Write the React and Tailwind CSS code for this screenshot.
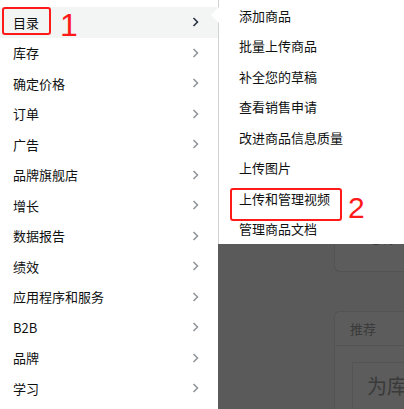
import React from "react";

const mainItems = [
  "目录",
  "库存",
  "确定价格",
  "订单",
  "广告",
  "品牌旗舰店",
  "增长",
  "数据报告",
  "绩效",
  "应用程序和服务",
  "B2B",
  "品牌",
  "学习",
];

const subItems = [
  "添加商品",
  "批量上传商品",
  "补全您的草稿",
  "查看销售申请",
  "改进商品信息质量",
  "上传图片",
  "上传和管理视频",
  "管理商品文档",
];

const Chevron = ({ dark }) => (
  <svg width="7" height="10" viewBox="0 0 7 10" fill="none">
    <path
      d="M1.5 1 L5.5 5 L1.5 9"
      stroke={dark ? "#232f3e" : "#8f9398"}
      strokeWidth="1.5"
    />
  </svg>
);

const App = () => {
  return (
    <div
      className="relative flex w-[404px] h-[409px] overflow-hidden bg-white"
      style={{ fontFamily: '"Noto Sans CJK SC", "Noto Sans", sans-serif' }}
    >
      {/* left menu */}
      <div className="w-[218px] shrink-0 pt-[7px] bg-white">
        {mainItems.map((item, i) => (
          <div
            key={item}
            className={
              "flex items-center justify-between h-[30.5px] pl-[13px] pr-[19px] text-[13px] text-[#0f1111] " +
              (i === 0 ? "bg-[#f3f4f4]" : "")
            }
          >
            <span>{item}</span>
            <Chevron dark={i === 0} />
          </div>
        ))}
      </div>

      {/* right side */}
      <div className="flex flex-col flex-1 min-w-0">
        <div className="h-[7px] bg-[#2b3035]" />
        <div className="relative z-10 flex flex-col h-[245px] bg-white border-l border-[#cfd3d3]">
          <div className="absolute left-[-8px] top-[7px] w-0 h-0 border-y-[8px] border-y-transparent border-r-[8px] border-r-white" />
          {subItems.map((item) => (
            <div
              key={item}
              className="flex items-center h-[30.5px] pl-[20px] text-[13px] text-[#0f1111]"
            >
              {item}
            </div>
          ))}
        </div>
        <div className="flex flex-col flex-1 bg-[#5a5a5a] pl-[116px]">
          <div className="h-[30px] -mt-[2px] rounded-bl-[6px] border-l border-b border-[#535353] bg-[#5c5c5c] overflow-hidden">
            <div className="flex items-center gap-[9px] pl-[16px] -mt-[13px] whitespace-nowrap text-[13px] leading-[18px] text-[#3f3f3f]">
              <span>✓</span>
              <span>心得</span>
            </div>
          </div>
          <div className="mt-[39px] flex-1 rounded-tl-[6px] border-l border-t border-[#535353] bg-[#5c5c5c] overflow-hidden">
            <div className="h-[34px] flex items-center pl-[15px] text-[13px] text-[#3a3a3a] border-b border-[#535353]">
              推荐
            </div>
            <div className="mt-[16px] ml-[17px] h-[60px] border-l border-t border-[#545454] pl-[14px] pt-[8px] whitespace-nowrap text-[20px] text-[#3a3a3a]">
              为库
            </div>
          </div>
        </div>
      </div>

      {/* annotations */}
      <div className="absolute left-[2px] top-[7px] w-[49px] h-[28px] border-[2.5px] border-[#ff1a1a] rounded-[3px]" />
      <div
        className="absolute left-[60px] top-[7px] text-[32px] leading-[36px] text-[#ff1a1a]"
        style={{ fontFamily: '"Liberation Sans", sans-serif' }}
      >
        1
      </div>
      <div className="absolute z-20 left-[230px] top-[188px] w-[112px] h-[33px] border-[2.5px] border-[#ff1a1a] rounded-[3px]" />
      <div
        className="absolute z-20 left-[348px] top-[191px] text-[30px] leading-[34px] text-[#ff1a1a]"
        style={{ fontFamily: '"Liberation Sans", sans-serif' }}
      >
        2
      </div>
    </div>
  );
};

export default App;
